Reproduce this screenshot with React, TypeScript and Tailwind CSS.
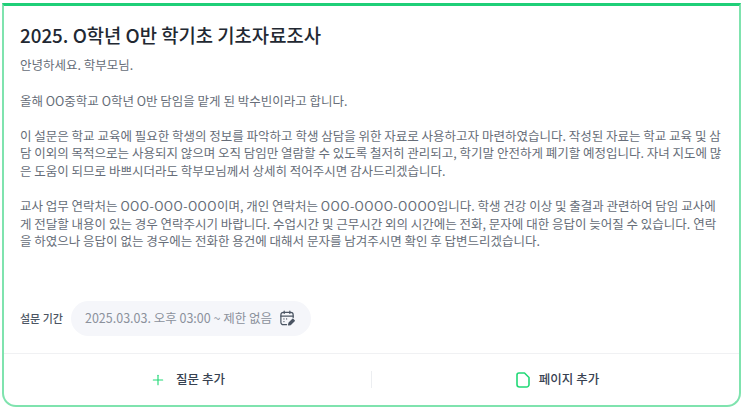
import { Plus } from "lucide-react"

function CalendarEditIcon() {
  return (
    <svg width="17" height="17" viewBox="0 0 18 18" fill="none" stroke="#4b5563" strokeWidth="1.3" strokeLinecap="round" strokeLinejoin="round">
      <path d="M8 15.5H4.5A2.5 2.5 0 0 1 2 13V5a2.5 2.5 0 0 1 2.5-2.5h8A2.5 2.5 0 0 1 15 5v3" />
      <path d="M2 6.5h13M5.5 1.2v2.4M11.5 1.2v2.4" />
      <path d="M5.2 9.5h.1M8 9.5h.1M5.2 12.3h.1" />
      <path d="M10.2 15.8l.4-2 4-4 1.6 1.6-4 4-2 .4z" fill="#4b5563" />
    </svg>
  )
}

function PageIcon() {
  return (
    <svg width="14" height="16" viewBox="0 0 14 16" fill="none" stroke="#22d977" strokeWidth="1.6" strokeLinejoin="round">
      <path d="M3 1h5.5L13 5.5V12.5A2.5 2.5 0 0 1 10.5 15h-7A2.5 2.5 0 0 1 1 12.5V3a2 2 0 0 1 2-2z" />
    </svg>
  )
}

export default function App() {
  return (
    <div className="w-[743px] h-[409px] bg-white pt-[3px] pb-[2px] pl-[2px] pr-[2px] font-['Noto_Sans_CJK_KR','Noto_Sans',sans-serif]">
      <div className="h-full flex flex-col border-2 border-t-[3px] border-[#7fe3ae] border-t-[#1fcf78] rounded-b-[14px]">
        <div className="flex-1 px-[16px] pt-[15px]">
          <h1 className="text-[18.8px] leading-[27px] font-medium text-[#222832]">
            2025. O학년 O반 학기초 기초자료조사
          </h1>
          <div className="mt-[8.4px] text-[12.5px] leading-[17.6px] text-[#666d78] whitespace-pre-line">
            {`안녕하세요. 학부모님.

올해 OO중학교 O학년 O반 담임을 맡게 된 박수빈이라고 합니다.

이 설문은 학교 교육에 필요한 학생의 정보를 파악하고 학생 삼담을 위한 자료로 사용하고자 마련하였습니다. 작성된 자료는 학교 교육 및 삼담 이외의 목적으로는 사용되지 않으며 오직 담임만 열람할 수 있도록 철저히 관리되고, 학기말 안전하게 폐기할 예정입니다. 자녀 지도에 많은 도움이 되므로 바쁘시더라도 학부모님께서 상세히 적어주시면 감사드리겠습니다.

교사 업무 연락처는 `}
            <span className="tracking-[0.4px]">OOO-OOO-OOO</span>
            {`이며, 개인 연락처는 `}
            <span className="tracking-[0.4px]">OOO-OOOO-OOOO</span>
            {`입니다. 학생 건강 이상 및 출결과 관련하여 담임 교사에게 전달할 내용이 있는 경우 연락주시기 바랍니다. 수업시간 및 근무시간 외의 시간에는 전화, 문자에 대한 응답이 늦어질 수 있습니다. 연락을 하였으나 응답이 없는 경우에는 전화한 용건에 대해서 문자를 남겨주시면 확인 후 답변드리겠습니다.`}
          </div>
          <div className="mt-[50.6px] flex items-center gap-[8px]">
            <span className="text-[11px] font-medium text-[#4b5563]">설문 기간</span>
            <div className="h-[35px] flex items-center gap-[7px] rounded-full bg-[#f5f6fa] pl-[14px] pr-[15px]">
              <span className="text-[12.5px] text-[#8b919c]">2025.03.03. 오후 03:00 ~ 제한 없음</span>
              <CalendarEditIcon />
            </div>
          </div>
        </div>
        <div className="h-[52px] flex items-center border-t border-[#f0f1f3]">
          <button className="flex-1 flex items-center justify-center gap-[10px] text-[12.5px] font-medium text-[#374151]">
            <Plus size={16} color="#22d977" strokeWidth={1.7} />
            질문 추가
          </button>
          <div className="w-px h-[17px] bg-[#eceef1]" />
          <button className="flex-1 flex items-center justify-center text-[12.5px] font-medium text-[#374151]">
            <span className="flex items-center gap-[9px] ml-[4px]">
              <PageIcon />
              페이지 추가
            </span>
          </button>
        </div>
      </div>
    </div>
  )
}
